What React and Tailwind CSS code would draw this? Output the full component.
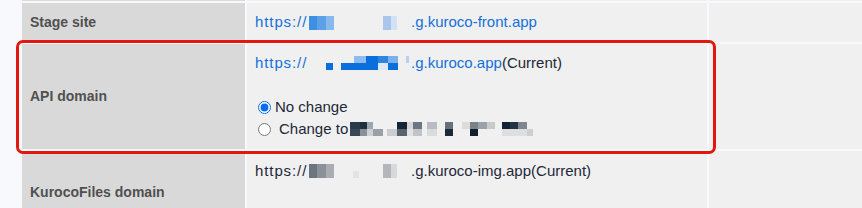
import React from "react";

const font = { fontFamily: '"Liberation Sans", Arial, sans-serif' };

// Mosaic: list of [width, topColor, bottomColor]
function Mosaic({ cells, className = "" }) {
  return (
    <span className={"inline-flex items-center align-middle " + className}>
      {cells.map((c, i) => (
        <span key={i} className="flex flex-col" style={{ width: c[0] }}>
          <span className="h-[7px]" style={{ background: c[1] }} />
          <span className="h-[7px]" style={{ background: c[2] }} />
        </span>
      ))}
    </span>
  );
}

const T = "transparent";

const stageMosaic = [
  [8, "#3f8fe0", "#3f8fe0"],
  [9, "#5ca0e8", "#5ca0e8"],
  [8, "#88b9ee", "#88b9ee"],
  [49, T, T],
  [8, "#a9c7ec", "#a9c7ec"],
  [6, "#d3e2f3", "#d3e2f3"],
  [14, T, T],
];

const apiMosaic = [
  [17, T, T],
  [7, T, "#0a6fdd"],
  [8, T, T],
  [13, T, "#0a6fdd"],
  [12, "#8fbbee", "#0a6fdd"],
  [12, "#0a6fdd", "#0a6fdd"],
  [10, "#2f83e2", "#dde8f3"],
  [10, "#7ab0ec", "#0a6fdd"],
  [8, T, T],
  [3, "#b8d0ee", T],
  [2, T, T],
];

const filesMosaic = [
  [8, "#6c7480", "#6c7480"],
  [9, "#8b9199", "#8b9199"],
  [8, "#a9adb3", "#a9adb3"],
  [19, T, T],
  [6, T, "#e3e3e3"],
  [24, T, T],
  [8, "#b3b6ba", "#b3b6ba"],
  [6, "#d8d9db", "#d8d9db"],
  [14, T, T],
];

const changeMosaic = [
  [10, "#2a3a4a", "#3a4856"],
  [7, "#1f2f40", "#8a9098"],
  [6, "#a0a6ae", "#cfd2d5"],
  [10, T, "#9aa0a7"],
  [4, T, T],
  [10, T, "#c9ccd0"],
  [10, "#152535", "#5a636d"],
  [6, "#d6d6d6", "#e2e2e2"],
  [9, "#6d7680", "#c0c4c8"],
  [5, T, T],
  [10, "#b9bdc3", "#d9dbdd"],
  [8, T, T],
  [8, "#6a7078", "#1a2a3a"],
  [9, T, T],
  [8, "#dcdcdc", T],
  [8, "#7b828a", "#111f2f"],
  [9, "#9ba1a8", T],
  [8, "#c8cbce", T],
  [7, T, T],
  [8, "#122335", "#dedede"],
  [8, "#233446", "#dedede"],
  [9, "#7f868e", "#dedede"],
  [6, T, "#cfcfcf"],
];

function Label({ children }) {
  return (
    <div className="flex items-center bg-[#d9d9d9] pl-2 text-[14px] font-bold text-[#505050]">
      {children}
    </div>
  );
}

export default function App() {
  return (
    <div
      className="relative h-[208px] w-[862px] overflow-hidden bg-[#f8f9fd]"
      style={font}
    >
      <div className="grid grid-cols-[223px_460px_200px] grid-rows-[1px_39px_105px_82px] gap-[2px] pl-[22px]">
        {/* cut-off previous row */}
        <div className="bg-[#d9d9d9]" />
        <div className="bg-[#f0f0f0]" />
        <div className="bg-[#f0f0f0]" />

        {/* Stage site */}
        <Label>Stage site</Label>
        <div className="flex items-center bg-[#f0f0f0] pl-2 text-[15px] text-[#1470d9]">
          <span className="inline-block w-[54px] tracking-[0.9px]">https://</span>
          <Mosaic cells={stageMosaic} />
          <span>.g.kuroco-front.app</span>
        </div>
        <div className="bg-[#f0f0f0]" />

        {/* API domain */}
        <Label>API domain</Label>
        <div className="bg-[#f0f0f0] pl-2 pt-[8px] text-[15px] leading-[22px] text-[#1e2838]">
          <div className="flex items-center">
            <span className="inline-block w-[54px] tracking-[0.9px] text-[#1470d9]">https://</span>
            <Mosaic cells={apiMosaic} />
            <span className="text-[#1470d9]">.g.kuroco.app</span>
            <span>(Current)</span>
          </div>
          <div className="h-[22px]" />
          <label className="flex items-center">
            <input
              type="radio"
              name="api"
              defaultChecked
              className="m-0 ml-[3px] h-[13px] w-[13px] accent-[#0a6cf0]"
            />
            <span className="ml-[4px]">No change</span>
          </label>
          <label className="flex items-center">
            <input
              type="radio"
              name="api"
              className="m-0 ml-[3px] h-[13px] w-[13px]"
            />
            <span className="ml-[8px]">Change to</span>
            <Mosaic cells={changeMosaic} className="ml-[2px]" />
          </label>
        </div>
        <div className="bg-[#f0f0f0]" />

        {/* KurocoFiles domain */}
        <Label>KurocoFiles domain</Label>
        <div className="bg-[#f0f0f0] pl-2 pt-[9px] text-[15px] leading-[22px] text-[#1e2838]">
          <div className="flex items-center">
            <span className="inline-block w-[54px] tracking-[0.9px]">https://</span>
            <Mosaic cells={filesMosaic} />
            <span>.g.kuroco-img.app(Current)</span>
          </div>
        </div>
        <div className="bg-[#f0f0f0]" />
      </div>

      {/* red highlight annotation */}
      <div className="pointer-events-none absolute left-[16px] top-[40px] h-[114px] w-[700px] rounded-[7px] border-[3px] border-[#e2170f]" />
    </div>
  );
}
